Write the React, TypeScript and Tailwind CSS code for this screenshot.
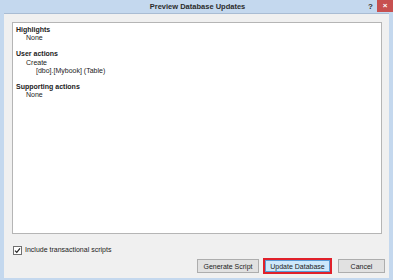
// Preview Database Updates dialog (Windows 8 style)

const FONT = { fontFamily: '"Liberation Sans", Arial, sans-serif' }

function Section({ title, children }: { title: string; children: React.ReactNode }) {
  return (
    <div className="flex flex-col">
      <div className="font-bold h-[8.3px] leading-[8.3px]">{title}</div>
      <div className="pl-[10px] flex flex-col">{children}</div>
    </div>
  )
}

function Line({ children, indent }: { children: React.ReactNode; indent?: boolean }) {
  return (
    <div className={indent ? 'h-[8.3px] leading-[8.3px] pl-[10px]' : 'h-[8.3px] leading-[8.3px]'}>
      {children}
    </div>
  )
}

export default function App() {
  return (
    <div
      className="w-[393px] h-[280px] bg-[#c4d8ee] flex flex-col text-[#222] text-[7px]"
      style={FONT}
    >
      {/* Title bar */}
      <div className="h-[13px] flex items-center relative shrink-0">
        <div className="flex-1 text-center font-bold text-[7.5px] text-[#2b2b2b] pl-[2px]">
          Preview Database Updates
        </div>
        <div className="absolute right-[20px] top-[1px] text-[8px] font-bold text-[#333]">?</div>
        <div className="absolute right-0 top-0 w-[16px] h-[12px] bg-[#c75050] flex items-center justify-center text-white text-[8px] font-bold">
          ×
        </div>
      </div>

      {/* Body */}
      <div className="flex-1 mx-[4px] mb-[5px] bg-[#f0f0f0] border-t border-[#a9bcd3] flex flex-col pl-[8px] pr-[7px] pt-[8px] pb-[4px]">
        <div className="h-[212px] bg-white border border-[#b5b5b5] pl-[3px] pt-[3px] flex flex-col gap-[7.7px]">
          <Section title="Highlights">
            <Line>None</Line>
          </Section>
          <Section title="User actions">
            <Line>Create</Line>
            <Line indent>[dbo].[Mybook] (Table)</Line>
          </Section>
          <Section title="Supporting actions">
            <Line>None</Line>
          </Section>
        </div>

        <div className="flex items-center gap-[3px] mt-[12px] ml-[1px] h-[9px]">
          <div className="w-[9px] h-[9px] border border-[#707070] bg-white flex items-center justify-center">
            <svg width="7" height="7" viewBox="0 0 7 7">
              <path d="M1 3.6 L2.8 5.4 L6 1.4" stroke="#222" strokeWidth="1.2" fill="none" />
            </svg>
          </div>
          <span>Include transactional scripts</span>
        </div>

        <div className="flex justify-end items-center mt-[3px] mr-[-3px]">
          <button className="w-[62px] h-[14px] bg-[#e1e1e1] border border-[#adadad] text-[7px] leading-none">
            Generate Script
          </button>
          <div className="ml-[4px] border-2 border-[#e0202a]">
            <button className="w-[65px] h-[12px] bg-[#cde8fb] border border-[#5a9bd5] text-[7px] leading-none block">
              Update Database
            </button>
          </div>
          <button className="ml-[6px] w-[47px] h-[14px] bg-[#e1e1e1] border border-[#adadad] text-[7px] leading-none">
            Cancel
          </button>
        </div>
      </div>
    </div>
  )
}
